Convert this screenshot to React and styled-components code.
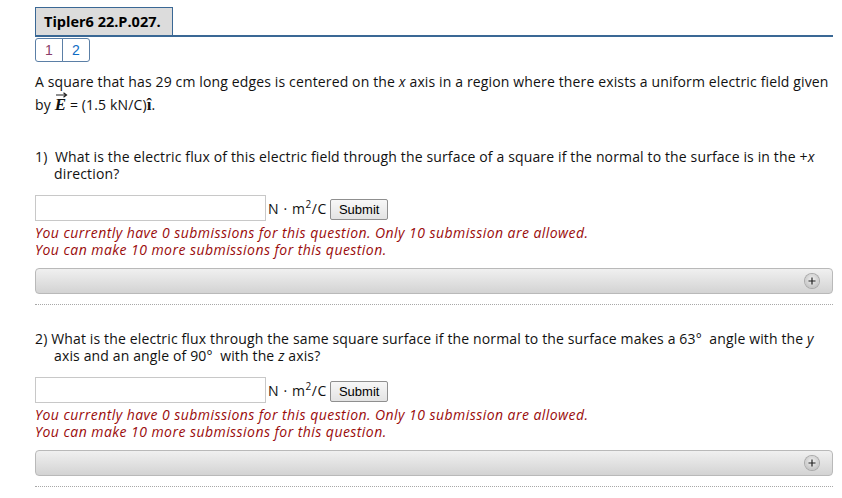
import React from "react";
import styled, { createGlobalStyle } from "styled-components";

const GlobalStyle = createGlobalStyle`
  body {
    margin: 0;
    background: #fff;
    font-family: "Open Sans", "DejaVu Sans", sans-serif;
    font-size: 14px;
    letter-spacing: 0.14px;
    color: #111;
  }
`;

const Page = styled.div`
  width: 798px;
  margin-left: 35px;
  padding-top: 7px;
`;

const TitleBar = styled.div`
  display: flex;
  border-bottom: 2px solid #3a6895;
`;

const TitleTab = styled.div`
  background: #dcdcdc;
  border: 1px solid #3a6895;
  border-bottom: none;
  padding: 0 11px 0 8px;
  height: 27px;
  display: flex;
  align-items: center;
  font-weight: 700;
  font-size: 14.5px;
  letter-spacing: 0;
  color: #000;
`;

const Pager = styled.div`
  display: flex;
  margin-top: 1px;
`;

const PageLink = styled.a`
  width: 26px;
  height: 22px;
  display: flex;
  align-items: center;
  justify-content: center;
  border: 1px solid #5b7fa6;
  border-radius: ${(p) => (p.$first ? "3px 0 0 3px" : "0 3px 3px 0")};
  margin-left: ${(p) => (p.$first ? "0" : "-1px")};
  color: ${(p) => (p.$visited ? "#8a3d6a" : "#0f6cc4")};
  font-family: "Liberation Sans", Arial, sans-serif;
  font-size: 14px;
  text-decoration: none;
`;

const Intro = styled.p`
  margin: 8px 0 0;
  line-height: 23px;
`;

const VecE = styled.span`
  display: inline-block;
  position: relative;
  font-family: "Liberation Serif", serif;
  font-weight: 700;
  font-style: italic;
  font-size: 17px;
  line-height: 17px;
  svg {
    position: absolute;
    left: 1px;
    top: -4px;
  }
`;

const Hat = styled.span`
  font-family: "Liberation Serif", serif;
  font-weight: 700;
  font-size: 17px;
  line-height: 0;
`;

const Question = styled.div`
  margin-top: ${(p) => p.$top}px;
`;

const Prompt = styled.p`
  margin: 0;
  line-height: 17px;
  padding-left: 19px;
  text-indent: -19px;
`;

const AnswerRow = styled.div`
  display: flex;
  align-items: center;
  margin-top: 13px;
`;

const Input = styled.input`
  width: 231px;
  height: 26px;
  box-sizing: border-box;
  border: 1px solid #c8c8c8;
  margin: 0;
`;

const Units = styled.span`
  margin-left: 2px;
  letter-spacing: 0.6px;
  sup {
    font-size: 10px;
    line-height: 0;
  }
`;

const SubmitButton = styled.button`
  margin-left: 3px;
  height: 21px;
  margin-top: 2px;
  padding: 0 8px;
  font-family: "Liberation Sans", Arial, sans-serif;
  font-size: 13px;
  color: #000;
  background: linear-gradient(#f7f7f7, #e3e3e3);
  border: 1px solid #8f8f8f;
  border-radius: 2px;
`;

const Notice = styled.div`
  color: #9a0b0b;
  font-style: italic;
  line-height: 17px;
  letter-spacing: 0.45px;
  margin-top: 3px;
`;

const Bar = styled.div`
  margin-top: 10px;
  height: 26px;
  box-sizing: border-box;
  border: 1px solid #b9b9b9;
  border-radius: 4px;
  background: linear-gradient(#f0f0f0, #d3d3d3);
  display: flex;
  align-items: center;
  justify-content: flex-end;
  padding-right: 13px;
`;

const PlusButton = styled.span`
  width: 14px;
  height: 14px;
  border-radius: 50%;
  background: radial-gradient(circle at 50% 40%, #f2f2f2, #b5b5b5);
  box-shadow: 0 0 0 1px #a9a9a9;
  display: flex;
  align-items: center;
  justify-content: center;
`;

const Divider = styled.div`
  margin-top: 10px;
  border-bottom: 1px dotted #a8a8a8;
`;

const questions = [
  {
    id: 1,
    top: 32,
    text: (
      <>
        1)&nbsp; What is the electric flux of this electric field through the surface of a
        square if the normal to the surface is in the +<i>x</i> direction?
      </>
    ),
  },
  {
    id: 2,
    top: 25,
    text: (
      <>
        2) What is the electric flux through the same square surface if the normal to the
        surface makes a 63°&nbsp; angle with the <i>y</i> axis and an angle of 90°&nbsp; with
        the <i>z</i> axis?
      </>
    ),
  },
];

const Plus = () => (
  <PlusButton>
    <svg width="8" height="8" viewBox="0 0 8 8">
      <path d="M4 0.5v7M0.5 4h7" stroke="#222" strokeWidth="1.2" />
    </svg>
  </PlusButton>
);

const QuestionBlock = ({ q }) => (
  <Question $top={q.top}>
    <Prompt>{q.text}</Prompt>
    <AnswerRow>
      <Input type="text" />
      <Units>
        N · m<sup>2</sup>/C
      </Units>
      <SubmitButton>Submit</SubmitButton>
    </AnswerRow>
    <Notice>
      You currently have 0 submissions for this question. Only 10 submission are allowed.
      <br />
      You can make 10 more submissions for this question.
    </Notice>
    <Bar>
      <Plus />
    </Bar>
    <Divider />
  </Question>
);

export default function App() {
  return (
    <Page>
      <GlobalStyle />
      <TitleBar>
        <TitleTab>Tipler6 22.P.027.</TitleTab>
      </TitleBar>
      <Pager>
        <PageLink $first $visited href="#">
          1
        </PageLink>
        <PageLink href="#">2</PageLink>
      </Pager>
      <Intro>
        A square that has 29 cm long edges is centered on the <i>x</i> axis in a region where
        there exists a uniform electric field given by{" "}
        <VecE>
          E
          <svg width="12" height="6" viewBox="0 0 12 6">
            <path d="M0 3h10M7.5 0.8L10.5 3L7.5 5.2" stroke="#222" strokeWidth="1.2" fill="none" />
          </svg>
        </VecE>{" "}
        = (1.5 kN/C)<Hat>î</Hat>.
      </Intro>
      {questions.map((q) => (
        <QuestionBlock key={q.id} q={q} />
      ))}
    </Page>
  );
}
